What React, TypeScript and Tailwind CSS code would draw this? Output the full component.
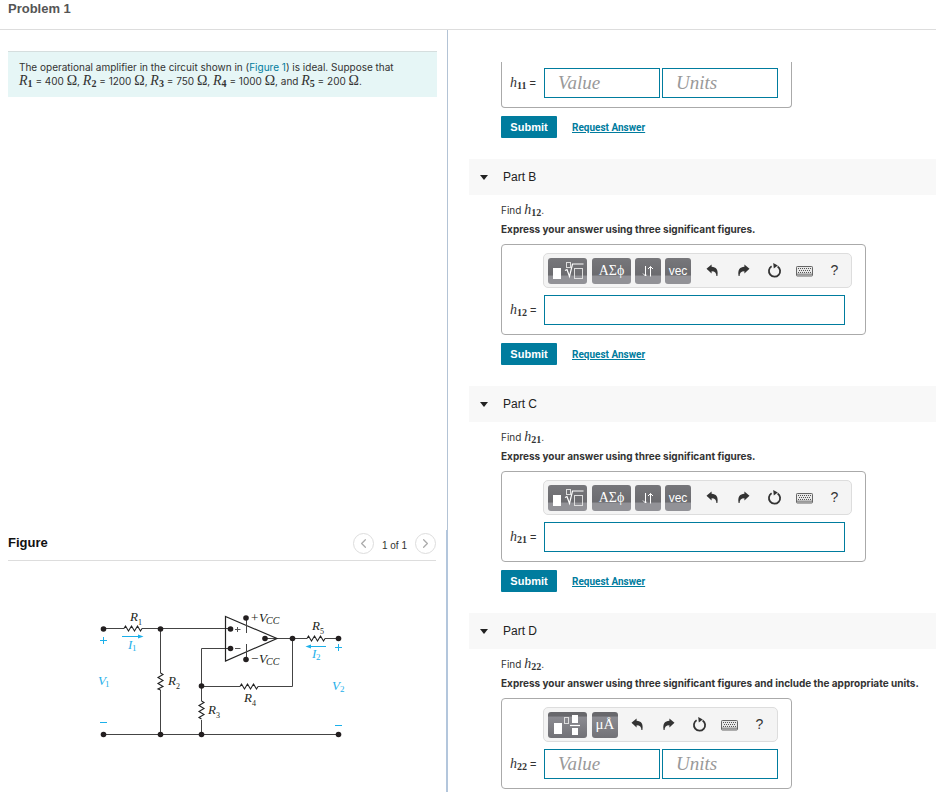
import React from 'react';
import { ChevronLeft, ChevronRight } from 'lucide-react';

interface MathVarProps {
  name: string;
  sub: string;
}

const MathVar: React.FC<MathVarProps> = ({ name, sub }) => (
  <span className="font-['Liberation_Serif',serif] text-[14px] leading-none font-normal">
    <i>{name}</i>
    <span className="relative top-[2px] text-[10px] font-bold">{sub}</span>
  </span>
);

const Ohm: React.FC = () => (
  <span className="font-['Liberation_Serif',serif] text-[14px] leading-none">Ω</span>
);

const resistors = [
  { sub: '1', value: '400' },
  { sub: '2', value: '1200' },
  { sub: '3', value: '750' },
  { sub: '4', value: '1000' },
  { sub: '5', value: '200' },
];

// --- toolbar icons ---

const UndoIcon: React.FC = () => (
  <svg width="13" height="13" viewBox="0 0 13 13" fill="#333">
    <path d="M0.5 4.8 L5.6 0.4 V2.8 C10 3 12.6 5.8 11.4 12 H10.4 C10.4 9 9 7.4 5.6 7.3 V9.5 Z" />
  </svg>
);

const RedoIcon: React.FC = () => (
  <svg width="13" height="13" viewBox="0 0 13 13" fill="#333">
    <path d="M12.5 4.8 L7.4 0.4 V2.8 C3 3 0.4 5.8 1.6 12 H2.6 C2.6 9 4 7.4 7.4 7.3 V9.5 Z" />
  </svg>
);

const ResetIcon: React.FC = () => (
  <svg width="15" height="15" viewBox="0 0 15 15">
    <path d="M10.6 3.4 A5.6 5.6 0 1 1 4.6 3.3" fill="none" stroke="#333" strokeWidth="1.8" />
    <path d="M6.2 0 L10.8 2.4 L6.8 5.6 Z" fill="#333" />
  </svg>
);

const KeyboardIcon: React.FC = () => (
  <svg width="17" height="11" viewBox="0 0 17 11">
    <rect x="0.5" y="0.5" width="16" height="9.5" rx="0.8" fill="#e8e8e8" stroke="#666" />
    <path d="M2 2.5 H15" stroke="#555" strokeDasharray="1 1" />
    <path d="M2 4.5 H15" stroke="#555" strokeDasharray="1 1" strokeDashoffset="1" />
    <path d="M2 6.5 H15" stroke="#555" strokeDasharray="1 1" />
    <path d="M1 8.5 H16" stroke="#999" strokeWidth="2" />
  </svg>
);

const TemplateIcon: React.FC = () => (
  <svg width="32" height="20" viewBox="0 0 32 20">
    <rect x="1" y="7" width="8" height="11" fill="#fff" />
    <rect x="14.5" y="1.5" width="4" height="5" fill="none" stroke="#ddd" />
    <path d="M13 9.5 L15 8.5 L17.5 15.5 L20.5 3 H31.5" fill="none" stroke="#fff" strokeWidth="1.2" />
    <rect x="22.5" y="7.5" width="8" height="10" fill="none" stroke="#ddd" />
  </svg>
);

const FractionIcon: React.FC = () => (
  <svg width="32" height="20" viewBox="0 0 32 20">
    <rect x="2" y="8" width="8" height="11" fill="#fff" />
    <rect x="12.5" y="2.5" width="4" height="6" fill="none" stroke="#ddd" />
    <rect x="20" y="0" width="6" height="8" fill="#fff" />
    <path d="M18 10.5 H28" stroke="#fff" strokeWidth="1.2" />
    <rect x="20" y="13" width="6" height="7" fill="#fff" />
  </svg>
);

interface KeyProps {
  label: string;
  wide?: boolean;
  units?: boolean;
  children: React.ReactNode;
}

const ToolKey: React.FC<KeyProps> = ({ label, wide, units, children }) => (
  <button
    type="button"
    aria-label={label}
    className={`flex h-[26px] items-center justify-center rounded-[3px] text-white ${wide ? 'w-[39px]' : 'w-[26px]'} ${
      units
        ? 'bg-linear-to-b from-[#68686c] from-15% via-[#8b8b91] via-20% to-[#717176]'
        : 'bg-linear-to-b from-[#77777b] from-0% via-[#6b6b6f] via-65% to-[#929297] to-70%'
    }`}
  >
    {children}
  </button>
);

const ActionIcons: React.FC = () => (
  <div className="flex items-center">
    <button type="button" aria-label="undo" className="flex h-[26px] w-[31px] items-center justify-center">
      <UndoIcon />
    </button>
    <button type="button" aria-label="redo" className="flex h-[26px] w-[31px] items-center justify-center">
      <RedoIcon />
    </button>
    <button type="button" aria-label="reset" className="flex h-[26px] w-[30px] items-center justify-center">
      <ResetIcon />
    </button>
    <button type="button" aria-label="keyboard shortcuts" className="flex h-[26px] w-[30px] items-center justify-center pt-[2px]">
      <KeyboardIcon />
    </button>
    <button type="button" aria-label="help" className="h-[26px] w-[31px] text-[14px] text-[#333]">
      ?
    </button>
  </div>
);

const Toolbar: React.FC<{ units?: boolean }> = ({ units }) => (
  <div
    className={`mb-[7px] ml-[41px] flex h-[35px] items-center gap-1 rounded-[5px] border border-[#ddd] bg-[#f4f4f4] pl-1 ${
      units ? 'w-[235px]' : 'w-[309px]'
    }`}
  >
    {units ? (
      <div className="flex gap-[5px]">
        <ToolKey label="templates" wide units>
          <FractionIcon />
        </ToolKey>
        <ToolKey label="units" units>
          <span className="font-['Liberation_Serif',serif] text-[15px]">μÅ</span>
        </ToolKey>
      </div>
    ) : (
      <>
        <div className="flex gap-[5px]">
          <ToolKey label="templates" wide>
            <TemplateIcon />
          </ToolKey>
          <ToolKey label="symbols" wide>
            <span className="font-['Liberation_Serif',serif] text-[14px]">ΑΣϕ</span>
          </ToolKey>
        </div>
        <div className="mr-[2px] flex gap-1">
          <ToolKey label="arrows">
            <svg width="12" height="12" viewBox="0 0 12 12" fill="none" stroke="#fff">
              <path d="M3.5 1 V11 M1 8.5 L3.5 11 L4.5 9.8" />
              <path d="M8.5 11.5 V1.5 M6 4 L8.5 1.5 L11 4" />
            </svg>
          </ToolKey>
          <ToolKey label="vectors">
            <span className="text-[12px]">vec</span>
          </ToolKey>
        </div>
      </>
    )}
    <ActionIcons />
  </div>
);

const inputStyle =
  "h-[30px] rounded-none border border-[#007c9e] bg-white font-['Liberation_Serif',serif] text-[19px] text-[#333] outline-none placeholder:italic placeholder:text-[#999]";

interface AnswerProps {
  sub: string;
  units?: boolean;
  toolbar?: boolean;
}

const AnswerBox: React.FC<AnswerProps> = ({ sub, units, toolbar = true }) => (
  <div
    className={`border border-[#aaa] pb-[9px] ${units ? 'w-[291px]' : 'w-[365px]'} ${
      toolbar ? 'rounded-[4px] pt-2' : 'rounded-b-[4px] border-t-0 pt-[6px]'
    }`}
  >
    {toolbar && <Toolbar units={units} />}
    <div className="flex items-center">
      <label htmlFor={`h${sub}`} className="w-[42px] pl-2 text-[11px] leading-none whitespace-nowrap">
        <MathVar name="h" sub={sub} /> =
      </label>
      {units ? (
        <div className="flex gap-[2px]">
          <input id={`h${sub}`} type="text" placeholder="Value" className={`${inputStyle} w-[116px] px-[13px]`} />
          <input
            type="text"
            aria-label={`h${sub} units`}
            placeholder="Units"
            className={`${inputStyle} w-[116px] px-[13px]`}
          />
        </div>
      ) : (
        <input id={`h${sub}`} type="text" className={`${inputStyle} w-[301px] px-2`} />
      )}
    </div>
  </div>
);

const SubmitRow: React.FC = () => (
  <div className="mt-2 mb-[21px] flex items-center gap-[15px]">
    <button type="button" className="h-[22px] w-[56px] rounded-[1px] bg-[#007c9e] text-[11px] font-bold text-white">
      Submit
    </button>
    <a href="#request" className="font-['Roboto',sans-serif] text-[10px] font-bold text-[#007c9e] underline">
      Request Answer
    </a>
  </div>
);

interface PartProps extends AnswerProps {
  letter: string;
  instruction: string;
  last?: boolean;
}

const Part: React.FC<PartProps> = ({ letter, sub, instruction, units, last }) => (
  <section>
    <h2 className="flex h-9 items-center bg-[#f8f8f8] text-[12px] text-[#222]">
      <svg width="8" height="5" viewBox="0 0 8 5" className="mr-[15px] ml-[11px]">
        <path d="M0 0 H8 L4 5 Z" fill="#222" />
      </svg>
      Part {letter}
    </h2>
    <div className="pt-[6px] pl-8">
      <p className="h-[19px] font-['Inter',sans-serif] text-[10px] leading-[19px]">
        Find <MathVar name="h" sub={sub} />.
      </p>
      <p className="mb-[6px] h-[18px] font-['Inter',sans-serif] text-[10px] leading-[18px] font-bold whitespace-nowrap">
        {instruction}
      </p>
      <AnswerBox sub={sub} units={units} />
      {!last && <SubmitRow />}
    </div>
  </section>
);

// --- circuit figure ---

const nodes = [
  [103.5, 629],
  [160.5, 629],
  [230.5, 629],
  [230.5, 648.5],
  [246, 618],
  [246, 659.5],
  [265, 638.5],
  [292.5, 638.5],
  [338.5, 638.5],
  [201.5, 686],
  [103.5, 734.5],
  [160.5, 734.5],
  [201.5, 734.5],
  [338.5, 734.5],
];

const Circuit: React.FC = () => (
  <svg
    width="252"
    height="134"
    viewBox="96 608 252 134"
    role="img"
    aria-label="Operational amplifier circuit"
    className="font-['Liberation_Serif',serif]"
    fontSize="13"
    fill="#231f20"
  >
    <g fill="none" stroke="#444" strokeWidth="1">
      <path d="M103.5 628.5 H124" />
      <path d="M142 628.5 H230" />
      <path d="M160.5 629 V673 M160.5 690 V734" />
      <path d="M230 648.5 H201.5 V701 M201.5 720 V734" />
      <path d="M201.5 686.5 H240 M258 686.5 H292.5 V638.5" />
      <path d="M265 638.5 H307 M325 638.5 H338" />
      <path d="M103.5 734.5 H338.5" />
      <path d="M225.5 616.5 L277 638.5 L225.5 661 Z" stroke="#222" strokeWidth="1.2" />
      <path d="M246.5 618 V633 M246.5 644 V659" />
      <path d="M235 629.5 H240.5 M237.5 627 V632 M235 648.5 H240.5" stroke="#555" />
    </g>
    <g fill="none" stroke="#222" strokeWidth="1.1">
      <path d="M124 628.5 l1.5 -2.5 l3 5 l3 -5 l3 5 l3 -5 l3 5 l1.5 -2.5" />
      <path d="M160.5 673 l2.5 1.5 l-5 3 l5 3 l-5 3 l5 3 l-5 2.5 l2.5 1" />
      <path d="M201.5 701 l2.5 1.5 l-5 3 l5 3 l-5 3 l5 3 l-5 3 l2.5 1.5" />
      <path d="M240 686.5 l1.5 -2.5 l3 5 l3 -5 l3 5 l3 -5 l3 5 l1.5 -2.5" />
      <path d="M307 638.5 l1.5 -2.5 l3 5 l3 -5 l3 5 l3 -5 l3 5 l1.5 -2.5" />
    </g>
    {nodes.map(([cx, cy]) => (
      <circle key={`${cx}-${cy}`} cx={cx} cy={cy} r="2.8" />
    ))}
    <g fontStyle="italic">
      <text x="130" y="621">R</text>
      <text x="168" y="685">R</text>
      <text x="208" y="714">R</text>
      <text x="244" y="702">R</text>
      <text x="312" y="630">R</text>
    </g>
    <g fontSize="8">
      <text x="138" y="625">1</text>
      <text x="176" y="689">2</text>
      <text x="216" y="718">3</text>
      <text x="252" y="706">4</text>
      <text x="320" y="634">5</text>
    </g>
    <text x="251" y="622">+</text>
    <text x="251" y="663">−</text>
    <g fontStyle="italic">
      <text x="259" y="622">V</text>
      <text x="259" y="663">V</text>
      <text x="266" y="624" fontSize="10">CC</text>
      <text x="266" y="665" fontSize="10">CC</text>
    </g>
    <g fill="#1cb0ea" stroke="none">
      <path d="M122 636 H138 V634.5 L143.5 636.5 L138 638.5 V637 H122 Z" />
      <path d="M326 646 H311 V644.5 L305.5 646.5 L311 648.5 V647 H326 Z" />
      <path d="M100 640 H107 V641 H100 Z M103 637 H104 V644 H103 Z M100 722 H107 V723 H100 Z" />
      <path d="M335 647 H342 V648 H335 Z M338 644 H339 V651 H338 Z M335 725 H342 V726 H335 Z" />
      <g fontStyle="italic">
        <text x="128" y="649">I</text>
        <text x="312" y="658">I</text>
        <text x="98" y="685">V</text>
        <text x="332" y="690">V</text>
      </g>
      <g fontSize="9">
        <text x="132" y="651">1</text>
        <text x="316" y="660">2</text>
        <text x="105" y="687">1</text>
        <text x="340" y="692">2</text>
      </g>
    </g>
  </svg>
);

const App: React.FC = () => {
  const instruction = 'Express your answer using three significant figures.';

  return (
    <div className="flex min-h-screen flex-col bg-white font-['Liberation_Sans',Arial,sans-serif] text-[#333]">
      <header className="h-[30px] border-b border-[#ddd] pl-2">
        <h1 className="text-[13px] leading-[17px] font-bold text-[#555]">Problem 1</h1>
      </header>

      <div className="flex grow">
        <div className="flex w-[448px] shrink-0 flex-col">
          <div className="grow border-r border-[#b3c3d5] pt-[21px] pr-[10px] pl-2">
            <div className="border-t border-[#d5dede] bg-[#e6f6f6] pt-[9px] pb-[10px] pl-[11px] font-['Inter',sans-serif] text-[10px] leading-[13px]">
              <p className="h-[13px]">
                The operational amplifier in the circuit shown in (
                <a href="#figure" className="text-[#007c9e]">
                  Figure 1
                </a>
                ) is ideal. Suppose that
              </p>
              <p className="h-[13px]">
                {resistors.map(({ sub, value }, index) => (
                  <React.Fragment key={sub}>
                    {index === resistors.length - 1 && 'and '}
                    <MathVar name="R" sub={sub} /> = {value} <Ohm />
                    {index === resistors.length - 1 ? '.' : ', '}
                  </React.Fragment>
                ))}
              </p>
            </div>
          </div>

          <div id="figure" className="h-[262px] border-r-2 border-[#b3c6dc] pr-[10px] pl-2">
            <div className="flex h-[31px] items-center border-b border-[#ddd]">
              <h2 className="grow pb-1 text-[13px] font-bold text-[#111]">Figure</h2>
              <div className="flex items-center gap-2 pb-[3px] text-[10px]">
                <button
                  type="button"
                  aria-label="previous figure"
                  className="flex size-[21px] items-center justify-center rounded-full border border-[#ddd]"
                >
                  <ChevronLeft size={15} color="#aaa" />
                </button>
                <span className="pt-[4px]">1 of 1</span>
                <button
                  type="button"
                  aria-label="next figure"
                  className="flex size-[21px] items-center justify-center rounded-full border border-[#ddd]"
                >
                  <ChevronRight size={15} color="#aaa" />
                </button>
              </div>
            </div>
            <div className="pt-[47px] pl-[88px]">
              <Circuit />
            </div>
          </div>
        </div>

        <main className="min-w-0 grow pt-8 pl-[21px]">
          <div className="pl-8">
            <AnswerBox sub="11" units toolbar={false} />
            <SubmitRow />
          </div>
          <Part letter="B" sub="12" instruction={instruction} />
          <Part letter="C" sub="21" instruction={instruction} />
          <Part
            letter="D"
            sub="22"
            units
            last
            instruction="Express your answer using three significant figures and include the appropriate units."
          />
        </main>
      </div>
    </div>
  );
};

export default App;
